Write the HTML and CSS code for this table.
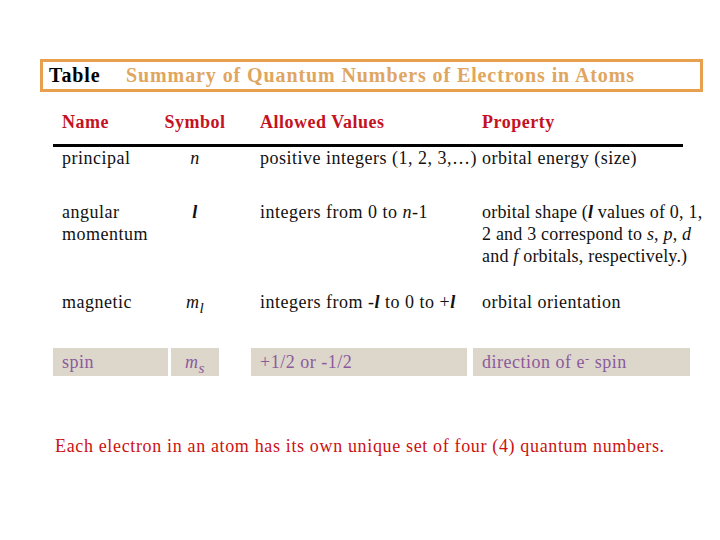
FILE: index.html
```html
<!DOCTYPE html>
<html>
<head>
<meta charset="utf-8">
<link rel="stylesheet" href="styles.css">
</head>
<body>
<div class="slide">
  <div class="caption">
    <span class="cap-label">Table</span>
    <span class="cap-title">Summary of Quantum Numbers of Electrons in Atoms</span>
  </div>
  <div class="table">
    <div class="row head">
      <div class="c1">Name</div>
      <div class="c2">Symbol</div>
      <div class="c3">Allowed Values</div>
      <div class="c4">Property</div>
    </div>
    <div class="rule"></div>
    <div class="row r-principal">
      <div class="c1">principal</div>
      <div class="c2"><i>n</i></div>
      <div class="c3">positive integers (1, 2, 3,…)</div>
      <div class="c4">orbital energy (size)</div>
    </div>
    <div class="row r-angular">
      <div class="c1">angular<br>momentum</div>
      <div class="c2"><b><i>l</i></b></div>
      <div class="c3">integers from 0 to <i>n</i>-1</div>
      <div class="c4 tight">orbital shape (<b><i>l</i></b> values of 0, 1,<br>2 and 3 correspond to <i>s</i>, <i>p</i>, <i>d</i><br>and <i>f</i> orbitals, respectively.)</div>
    </div>
    <div class="row r-magnetic">
      <div class="c1">magnetic</div>
      <div class="c2"><i>m<sub>l</sub></i></div>
      <div class="c3">integers from -<b><i>l</i></b> to 0 to +<b><i>l</i></b></div>
      <div class="c4">orbital orientation</div>
    </div>
    <div class="row r-spin">
      <div class="c1 cell">spin</div>
      <div class="c2 cell"><i>m<sub>s</sub></i></div>
      <div class="c3 cell">+1/2 or -1/2</div>
      <div class="c4 cell">direction of e<sup>-</sup> spin</div>
    </div>
  </div>
  <p class="note">Each electron in an atom has its own unique set of four (4) quantum numbers.</p>
</div>
</body>
</html>
```
FILE: styles.css
```css
html, body {
  margin: 0;
  padding: 0;
  background: #ffffff;
}
.slide {
  width: 720px;
  height: 540px;
  font-family: "Liberation Serif", "DejaVu Serif", serif;
  color: #111;
  padding-top: 59px;
  box-sizing: border-box;
}
.caption {
  margin-left: 40px;
  width: 663px;
  height: 33px;
  box-sizing: border-box;
  border: 3px solid #e8a04f;
  display: flex;
  align-items: center;
  padding-left: 6px;
  font-weight: bold;
  font-size: 20px;
  letter-spacing: 0.9px;
  white-space: nowrap;
}
.cap-label {
  color: #000;
  width: 77px;
}
.cap-title {
  color: #e0a65f;
}
.table {
  margin-left: 53px;
  width: 637px;
  font-size: 18px;
  letter-spacing: 0.5px;
}
.row {
  display: grid;
  grid-template-columns: 115px 3px 48px 32px 216px 6px 217px;
  line-height: 22px;
  white-space: nowrap;
}
.row > div {
  padding-left: 9px;
}
.row > .c1 { grid-column: 1; }
.row > .c2 {
  grid-column: 3;
  padding-left: 0;
  text-align: center;
}
.row > .c3 { grid-column: 5; }
.row > .c4 { grid-column: 7; }
.row > .tight {
  letter-spacing: 0.2px;
}
.head {
  margin-top: 19px;
  color: #c4121f;
  font-weight: bold;
}
.head > .c2 {
  display: flex;
  justify-content: center;
}
.rule {
  margin-top: 11px;
  height: 3px;
  width: 630px;
  background: #000;
}
.r-angular {
  margin-top: 32px;
}
.r-magnetic {
  margin-top: 24px;
}
.r-spin {
  margin-top: 35px;
  color: #8b5a9d;
}
.cell {
  background: #ddd6cb;
  padding-top: 3px;
  padding-bottom: 3px;
}
sub {
  font-size: 85%;
  vertical-align: -5px;
  line-height: 0;
}
sup {
  font-size: 70%;
  vertical-align: 6px;
  line-height: 0;
}
.note {
  margin: 58px 0 0 55px;
  color: #cc1111;
  font-size: 18px;
  letter-spacing: 0.65px;
  line-height: 24px;
  white-space: nowrap;
}
```
